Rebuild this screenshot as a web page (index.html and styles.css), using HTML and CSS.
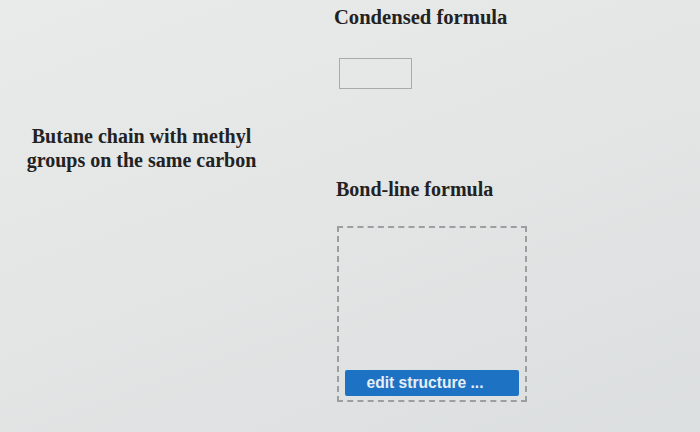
FILE: index.html
```html
<!DOCTYPE html>
<html>
<head>
<meta charset="utf-8">
<link rel="stylesheet" href="styles.css">
</head>
<body>
<div class="page">
  <div class="left">
    <p class="desc">Butane chain with methyl<br>groups on the same carbon</p>
  </div>
  <div class="right">
    <h2 class="title">Condensed formula</h2>
    <div class="input-box"></div>
    <h2 class="title bond">Bond-line formula</h2>
    <div class="sketch">
      <div class="spacer"></div>
      <button class="edit">edit structure ...</button>
    </div>
  </div>
</div>
</body>
</html>
```
FILE: styles.css
```css
html, body {
  margin: 0;
  padding: 0;
}
body {
  width: 700px;
  height: 432px;
  overflow: hidden;
  background: linear-gradient(160deg, #e9ebeb 0%, #e4e6e6 45%, #dcdfdf 100%);
  font-family: "Liberation Serif", "Times New Roman", serif;
  color: #222;
}
.page {
  display: grid;
  grid-template-columns: 283px 1fr;
  height: 432px;
}
.left {
  padding-top: 124px;
}
.desc {
  margin: 0;
  text-align: center;
  font-weight: bold;
  font-size: 20px;
  line-height: 24px;
}
.right {
  padding-left: 51px;
  display: flex;
  flex-direction: column;
  align-items: flex-start;
}
.title {
  margin: 5px 0 0 0;
  font-size: 20.6px;
  line-height: 24px;
  font-weight: bold;
}
.bond {
  margin-top: 88px;
  margin-left: 2px;
  font-size: 20px;
}
.input-box {
  margin-top: 29px;
  margin-left: 5px;
  width: 71px;
  height: 29px;
  border: 1px solid #a9abab;
  background: #e6e8e8;
}
.sketch {
  margin-top: 25px;
  margin-left: 3px;
  width: 180px;
  height: 168px;
  border: 2px dashed #9c9e9f;
  display: flex;
  flex-direction: column;
  padding: 0 0 4px 6px;
  box-sizing: content-box;
}
.spacer {
  flex: 1;
}
.edit {
  width: 174px;
  height: 26px;
  border: none;
  border-radius: 2px;
  background: #1e72c4;
  color: #e6eef6;
  font-family: "Liberation Sans", Arial, sans-serif;
  font-weight: bold;
  font-size: 15.6px;
  padding: 0 14px 0 0;
}
```
